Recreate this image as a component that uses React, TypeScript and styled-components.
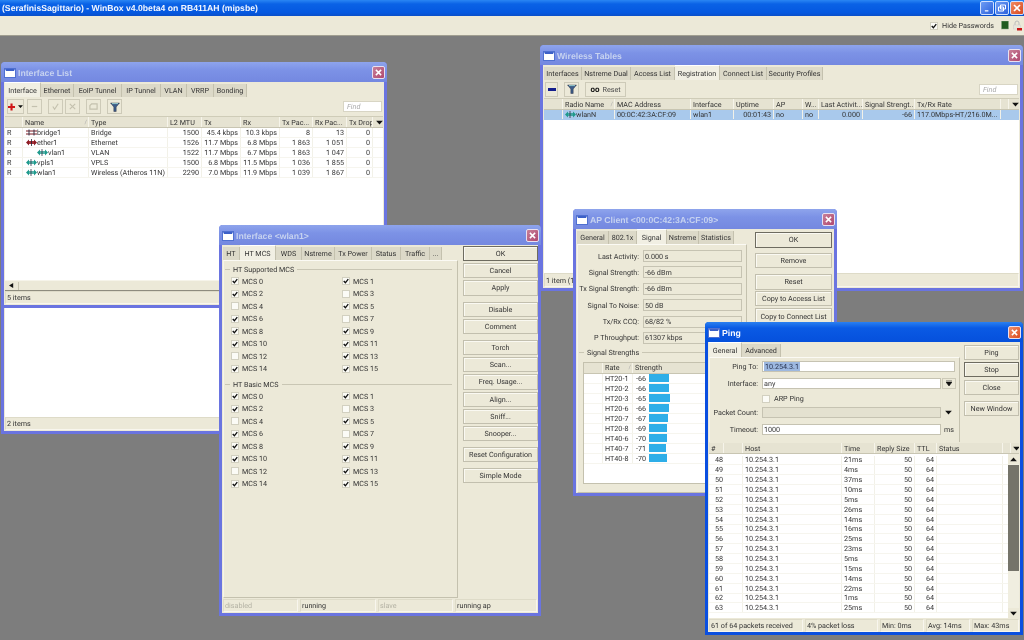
import React from "react";
import styled, { createGlobalStyle } from "styled-components";

const Global = createGlobalStyle`
  html, body { margin: 0; padding: 0; width: 1024px; height: 640px; overflow: hidden; background: #7d7d7d; }
  * { box-sizing: border-box; }
  #root { width: 1024px; height: 640px; }
`;

const Screen = styled.div`
  width: 1024px; height: 640px; display: flex; flex-direction: column;
  background: #7d7d7d; overflow: hidden; position: relative;
  font-family: Roboto, "Liberation Sans", Arial, sans-serif; font-size: 7.2px; color: #333;
  text-rendering: geometricPrecision;
  filter: blur(0.3px);
`;
const MainTitle = styled.header`
  height: 16px; flex: none; display: flex; align-items: center; justify-content: space-between;
  padding: 0 0 0 2px; background: linear-gradient(#2a86f4 0, #0a62e6 25%, #0558e0 80%, #0a4fc8 100%);
  color: #f4f8ff; font-family: "Liberation Sans", Arial, sans-serif; font-weight: bold; font-size: 8.65px;
`;
const TitleButtons = styled.div` display: flex; gap: 1px; `;
const CapBtn = styled.div<{ $red?: boolean }>`
  width: 14px; height: 14px; border: 1px solid #cfe0ff; border-radius: 2px;
  background: ${(p) => (p.$red ? "linear-gradient(135deg,#f08a60,#d84a20)" : "linear-gradient(135deg,#6d9cf4,#2c62dc)")};
  display: flex; align-items: center; justify-content: center;
`;
const MainBar = styled.div`
  height: 20px; flex: none; display: flex; align-items: center; justify-content: flex-end;
  background: #ece9d8; border-bottom: 1px solid #a09e90; padding: 0 2px 0 0;
`;
const Desktop = styled.main` flex: 1; position: relative; `;

const Win = styled.section<{ $x: number; $y: number; $w: number; $h: number; $z: number; $active?: boolean }>`
  position: absolute; left: ${(p) => p.$x}px; top: ${(p) => p.$y - 36}px;
  width: ${(p) => p.$w}px; height: ${(p) => p.$h}px; z-index: ${(p) => p.$z};
  display: flex; flex-direction: column; background: #ece9d8;
  border: 3px solid ${(p) => (p.$active ? "#0a4fe0" : "#6a74e0")}; border-top: 0;
  border-radius: 4px 4px 0 0;
`;
const TitleBar = styled.div<{ $active?: boolean }>`
  height: 20px; flex: none; margin: 0 -3px; padding: 1px 2px 0 4px; display: flex; align-items: center; gap: 3px;
  border-radius: 4px 4px 0 0; font-family: "Liberation Sans", Arial, sans-serif; font-weight: bold; font-size: 8.7px;
  background: ${(p) => (p.$active ? "linear-gradient(#2a80f0,#0a5ae4 30%,#0550dc)" : "linear-gradient(#8ea4ec,#7c92e6 40%,#7488e0)")};
  color: ${(p) => (p.$active ? "#f6f8ff" : "#c6d2f0")};
`;
const WinIcon = styled.span`
  width: 10px; height: 8px; background: #fff; border: 1px solid #fff; border-top: 2px solid #3c60c8; flex: none; outline: 1px solid #5070d0;
`;
const TitleText = styled.span` flex: 1; white-space: nowrap; `;
const CloseBtn = styled.div<{ $active?: boolean }>`
  width: 13px; height: 13px; border: 1px solid #e8e0f0; border-radius: 2px; display: flex; align-items: center; justify-content: center;
  background: ${(p) => (p.$active ? "linear-gradient(135deg,#f0906a,#dc4c20)" : "linear-gradient(135deg,#c88098,#b04870)")};
`;
const Body = styled.div` flex: 1; min-height: 0; display: flex; flex-direction: column; padding: 0 1px; `;
const Split = styled.div` flex: 1; min-height: 0; display: flex; `;
const PingTop = styled.div` height: 100px; flex: none; display: flex; `;
const LeftPane = styled.div<{ $w: number }>` width: ${(p) => p.$w}px; flex: none; display: flex; flex-direction: column; `;
const Tabs = styled.div<{ $pad?: number }>` height: 15px; flex: none; display: flex; align-items: flex-end; padding-left: ${(p) => p.$pad ?? 0}px; `;
const Tab = styled.div<{ $w: number; $active?: boolean }>`
  width: ${(p) => p.$w}px; height: ${(p) => (p.$active ? 15 : 13)}px; display: flex; align-items: center; justify-content: center; white-space: nowrap;
  background: ${(p) => (p.$active ? "#f1efe3" : "#dcd9c8")}; border-right: 1px solid #c4c1ae;
  ${(p) => p.$active && "border-top: 1px solid #fff;"}
`;
const Panel = styled.div<{ $open?: boolean }>`
  flex: 1; min-height: 0; border-top: 1px solid #fbfaf4; border-right: 1px solid #c4c1ae;
  border-bottom: ${(p) => (p.$open ? "0" : "1px solid #c4c1ae")};
  border-left: 1px solid #f6f4ea; display: flex; flex-direction: column;
`;
const Toolbar = styled.div<{ $h: number; $pad?: number }>`
  height: ${(p) => p.$h}px; flex: none; display: flex; align-items: center; gap: 6px; padding: 0 0 0 ${(p) => p.$pad ?? 2}px; border-bottom: 1px solid #cfccb8;
`;
const ToolBtn = styled.div<{ $w: number }>`
  width: ${(p) => p.$w}px; height: 15px; flex: none; display: flex; align-items: center; justify-content: center; gap: 3px;
  border: 1px solid #cdcab8; background: #ece9d8; color: #4a4a4a;
`;
const MiniBtn = styled(ToolBtn)` height: 11px; margin-left: 1px; `;
const ToolGroup = styled.div<{ $gap: number }>` display: flex; gap: ${(p) => p.$gap}px; `;
const FindBox = styled.div<{ $w: number }>`
  width: ${(p) => p.$w}px; height: 11px; margin-left: auto; margin-right: 1px; background: #fff; border: 1px solid #d8d5c4; color: #aaa; font-style: italic; padding: 0 3px;
  display: flex; align-items: center;
`;
const Table = styled.div`
  flex: 1; min-height: 0; background: #fff; display: flex; flex-direction: column; overflow: hidden;
`;
const SigTable = styled(Table)` border: 1px solid #c4c1ae; margin: 4px 3px 8px 5px; `;
const PingTable = styled(Table)` margin-top: 1px; `;
const Head = styled.div` height: 11px; flex: none; display: flex; background: #e6e3d2; border-bottom: 1px solid #c8c5b2; `;
const HeadCell = styled.div<{ $w: number }>`
  width: ${(p) => p.$w}px; flex: none; padding: 0 1px 0 2px; display: flex; align-items: center; justify-content: space-between; white-space: nowrap; overflow: hidden;
  border-right: 1px solid #f6f4ea;
`;
const SortMark = styled.span` color: #aaa; font-size: 6px; `;
const Row = styled.div<{ $h?: number; $sel?: boolean }>`
  height: ${(p) => p.$h ?? 10}px; flex: none; display: flex; align-items: center;
  background: ${(p) => (p.$sel ? "#a9c9ec" : "transparent")}; border-bottom: 1px solid ${(p) => (p.$sel ? "#a9c9ec" : "#f6f5ee")};
`;
const Cell = styled.div<{ $w: number; $right?: boolean; $indent?: number; $bare?: boolean }>`
  width: ${(p) => p.$w}px; flex: none; white-space: nowrap; overflow: hidden; display: flex; align-items: center;
  padding: 0 2px 0 ${(p) => 2 + (p.$indent ?? 0)}px; justify-content: ${(p) => (p.$right ? "flex-end" : "flex-start")};
  border-right: ${(p) => (p.$bare ? "0" : "1px solid #f2f1e8")}; height: 100%;
`;
const HScroll = styled.div`
  height: 11px; flex: none; display: flex; align-items: center; background: #ece9d8; border-top: 1px solid #f6f4ea; border-bottom: 1px solid #8e8c7e; padding-left: 3px;
`;
const HThumbEdge = styled.span` width: 1px; height: 8px; background: #c8c5b2; margin-left: 3px; `;
const Status = styled.div<{ $h?: number; $mt?: number; $mb?: number }>`
  height: ${(p) => p.$h ?? 13}px; flex: none; display: flex; gap: 2px; background: #ece9d8; margin: ${(p) => p.$mt ?? 0}px 0 ${(p) => p.$mb ?? 1}px;
`;
const StatusCell = styled.div<{ $w?: number; $dim?: boolean }>`
  ${(p) => (p.$w ? `width:${p.$w}px; flex:none;` : "flex:1;")} display: flex; align-items: center; padding: 0 1px; white-space: nowrap; overflow: hidden;
  border: 1px solid #dedbc8; border-right-color: #f8f6ee; border-bottom-color: #f8f6ee;
  color: ${(p) => (p.$dim ? "#b4b2a4" : "#333")};
`;
const BtnCol = styled.div<{ $w: number; $ml: number }>` width: ${(p) => p.$w}px; margin-left: ${(p) => p.$ml}px; flex: none; display: flex; flex-direction: column; `;
const PushBtn = styled.div<{ $mt: number; $h?: number; $focus?: boolean }>`
  height: ${(p) => p.$h ?? 15.2}px; margin-top: ${(p) => p.$mt}px; flex: none; display: flex; align-items: center; justify-content: center; white-space: nowrap;
  background: #ece9d8; border: 1px solid ${(p) => (p.$focus ? "#6e6c60" : "#c2bfae")};
  box-shadow: inset 1px 1px 0 #faf9f2;
`;
const GroupTitle = styled.div<{ $mt?: number }>`
  display: flex; align-items: center; gap: 3px; height: 10px; margin: ${(p) => p.$mt ?? 0}px 5px 0 7px; white-space: nowrap;
  &::before { content: ""; width: 5px; height: 1px; background: #c9c6b4; margin-left: -6px; }
  &::after { content: ""; flex: 1; height: 1px; background: #c9c6b4; }
`;
const McsGrid = styled.div<{ $mt: number }>` display: grid; grid-template-columns: 111px 100px; grid-auto-rows: 12.5px; margin: ${(p) => p.$mt}px 0 0 7px; `;
const McsItem = styled.div` display: flex; align-items: center; gap: 3px; `;
const Box = styled.span`
  width: 8px; height: 8px; flex: none; background: #fbfbf6; border: 1px solid #d2d0c0; display: flex; align-items: center; justify-content: center;
`;
const HideLabel = styled.span` margin: 0 7px 0 4px; `;
const CheckLabel = styled.span` margin-left: 4px; `;
const ResetGlyph = styled.b` font-size: 8px; color: #111; `;
const FormRow = styled.div<{ $h: number; $mt?: number }>` display: flex; align-items: center; height: ${(p) => p.$h}px; margin-top: ${(p) => p.$mt ?? 0}px; `;
const FieldLabel = styled.div<{ $w: number }>` width: ${(p) => p.$w}px; flex: none; text-align: right; padding-right: 4px; white-space: nowrap; `;
const Field = styled.div<{ $w: number; $white?: boolean; $dis?: boolean }>`
  width: ${(p) => p.$w}px; height: 100%; flex: none; display: flex; align-items: center; padding: 0 1px; white-space: nowrap;
  background: ${(p) => (p.$white ? "#fff" : p.$dis ? "#e4e1d0" : "#ece9d8")}; border: 1px solid #c6c3b2;
`;
const Selected = styled.span` background: #9db8e0; color: #27324f; padding: 0 1px; `;
const Bar = styled.span` height: 8px; background: #2eaee8; margin-left: 3px; display: block; flex: none; `;
const TableRow2 = styled.div` flex: 1; min-height: 0; display: flex; `;
const Rows = styled.div` flex: 1; min-width: 0; padding-top: 1.5px; `;
const VScroll = styled.div` width: 11px; flex: none; display: flex; flex-direction: column; background: #f0eee0; `;
const VArrow = styled.div` height: 10px; flex: none; display: flex; align-items: center; justify-content: center; background: #ece9d8; `;
const VThumb = styled.div` height: 106px; margin-top: 1px; flex: none; background: #75746a; `;
const VTrack = styled.div` flex: 1; background: #f0eee0; `;
const Tail = styled.div<{ $ml: number }>` margin-left: ${(p) => p.$ml}px; display: flex; align-items: center; `;

const X = ({ s = 7 }: { s?: number }) => (
  <svg width={s} height={s} viewBox="0 0 8 8"><path d="M1 1l6 6M7 1L1 7" stroke="#fff" strokeWidth="1.7" /></svg>
);
const Tick = () => (
  <svg width="6" height="6" viewBox="0 0 8 8"><path d="M1 4l2.2 2.4L7 1.5" fill="none" stroke="#111" strokeWidth="1.8" /></svg>
);
const Check = ({ on }: { on: boolean }) => <Box>{on ? <Tick /> : null}</Box>;
const Arrow = ({ dir = "down" }: { dir?: "down" | "up" | "left" }) => (
  <svg width="7" height="5" viewBox="0 0 8 6">
    <path d={dir === "down" ? "M0 1h8L4 5.5z" : dir === "up" ? "M0 5h8L4 .5z" : "M6 0v6L1 3z"} fill="#111" />
  </svg>
);
const Funnel = () => (
  <svg width="10" height="10" viewBox="0 0 10 10"><path d="M.5 1h9L6.2 5v4.5H3.8V5z" fill="#3c5c88" stroke="#223" strokeWidth=".4" /><path d="M2 1.6h6" stroke="#9cc" /></svg>
);
const IfIcon = ({ color = "#1f9a8c" }: { color?: string }) => (
  <svg width="11" height="7" viewBox="0 0 11 7" style={{ flex: "none" }}>
    <path d="M0 3.5L3 .5v6zM11 3.5L8 .5v6z" fill={color} />
    <path d="M3 2h5v3H3z" fill={color} opacity=".75" />
    <path d="M5 0v7" stroke="#334" strokeWidth=".8" />
  </svg>
);
const BridgeIcon = () => (
  <svg width="11" height="7" viewBox="0 0 11 7" style={{ flex: "none" }}>
    <path d="M0 2h11M0 5h11" stroke="#7c1a22" strokeWidth="1" /><path d="M3 .5v6M8 .5v6" stroke="#334" strokeWidth="1" />
  </svg>
);
const EtherIcon = () => (
  <svg width="11" height="7" viewBox="0 0 11 7" style={{ flex: "none" }}>
    <path d="M0 3.5L3 .5v6zM11 3.5L8 .5v6z" fill="#8c1c24" /><path d="M3 2h5v3H3z" fill="#a83038" /><path d="M5.5 0v7" stroke="#223" strokeWidth=".8" />
  </svg>
);
const Plus = () => (
  <svg width="10" height="10" viewBox="0 0 10 10"><path d="M3.5 0h3v3.5H10v3H6.5V10h-3V6.5H0v-3h3.5z" fill="#d01818" /></svg>
);
const Dim = ({ d }: { d: string }) => (
  <svg width="9" height="9" viewBox="0 0 10 10"><path d={d} fill="none" stroke="#c4c1ae" strokeWidth="1.3" /></svg>
);

type Col = { t: string; w: number; r?: boolean; sort?: boolean; arrow?: boolean };
const Header = ({ cols }: { cols: Col[] }) => (
  <Head>
    {cols.map((c, i) => (
      <HeadCell key={i} $w={c.w}>
        <span>{c.t}</span>
        {c.sort ? <SortMark>/</SortMark> : null}
        {c.arrow ? <Arrow /> : null}
      </HeadCell>
    ))}
  </Head>
);

const ifCols: Col[] = [
  { t: "", w: 18 }, { t: "Name", w: 66, sort: true }, { t: "Type", w: 79 }, { t: "L2 MTU", w: 34, r: true },
  { t: "Tx", w: 39, r: true }, { t: "Rx", w: 39, r: true }, { t: "Tx Pac...", w: 33, r: true }, { t: "Rx Pac...", w: 34, r: true },
  { t: "Tx Drop", w: 26, r: true }, { t: "", w: 12, arrow: true },
];
const ifRows = [
  { n: "bridge1", ic: <BridgeIcon />, i: 1, ty: "Bridge", v: ["1500", "45.4 kbps", "10.3 kbps", "8", "13", "0"] },
  { n: "ether1", ic: <EtherIcon />, i: 1, ty: "Ethernet", v: ["1526", "11.7 Mbps", "6.8 Mbps", "1 863", "1 051", "0"] },
  { n: "vlan1", ic: <IfIcon />, i: 12, ty: "VLAN", v: ["1522", "11.7 Mbps", "6.7 Mbps", "1 863", "1 047", "0"] },
  { n: "vpls1", ic: <IfIcon />, i: 1, ty: "VPLS", v: ["1500", "6.8 Mbps", "11.5 Mbps", "1 036", "1 855", "0"] },
  { n: "wlan1", ic: <IfIcon />, i: 1, ty: "Wireless (Atheros 11N)", v: ["2290", "7.0 Mbps", "11.9 Mbps", "1 039", "1 867", "0"] },
];
const ifTabs: [string, number][] = [["Interface", 36], ["Ethernet", 33], ["EoIP Tunnel", 48], ["IP Tunnel", 39], ["VLAN", 26], ["VRRP", 27], ["Bonding", 33]];

const wlTabs: [string, number][] = [["HT", 17], ["HT MCS", 36], ["WDS", 26], ["Nstreme", 33], ["Tx Power", 37], ["Status", 29], ["Traffic", 29], ["...", 12]];
const supported = [1, 1, 1, 0, 0, 1, 1, 0, 1, 1, 1, 1, 0, 1, 1, 1];
const basic = [1, 1, 1, 0, 0, 1, 1, 0, 1, 1, 1, 1, 0, 1, 1, 1];
const wlBtns: [string, number, boolean?][] = [
  ["OK", 1, true], ["Cancel", 2], ["Apply", 2], ["Disable", 6], ["Comment", 2], ["Torch", 6], ["Scan...", 2], ["Freq. Usage...", 2],
  ["Align...", 2], ["Sniff...", 2], ["Snooper...", 2], ["Reset Configuration", 6], ["Simple Mode", 6],
];

const wtCols: Col[] = [
  { t: "", w: 19 }, { t: "Radio Name", w: 52, sort: true }, { t: "MAC Address", w: 76 }, { t: "Interface", w: 43 }, { t: "Uptime", w: 40 }, { t: "AP", w: 29 },
  { t: "W...", w: 16 }, { t: "Last Activit...", w: 44 }, { t: "Signal Strengt...", w: 52 }, { t: "Tx/Rx Rate", w: 86 }, { t: "", w: 8 }, { t: "", w: 12, arrow: true },
];
const wtTabs: [string, number][] = [["Interfaces", 38], ["Nstreme Dual", 49], ["Access List", 44], ["Registration", 45], ["Connect List", 47], ["Security Profiles", 56]];

const apTabs: [string, number][] = [["General", 32], ["802.1x", 28], ["Signal", 30], ["Nstreme", 32], ["Statistics", 35]];
const apForm = [
  ["Last Activity:", "0.000 s"], ["Signal Strength:", "-66 dBm"], ["Tx Signal Strength:", "-66 dBm"], ["Signal To Noise:", "50 dB"], ["Tx/Rx CCQ:", "68/82 %"], ["P Throughput:", "61307 kbps"],
];
const sigCols: Col[] = [{ t: "", w: 19 }, { t: "Rate", w: 30, sort: true }, { t: "Strength", w: 110 }];
const sig: [string, number, number][] = [
  ["HT20-1", -66, 20], ["HT20-2", -66, 20], ["HT20-3", -65, 21], ["HT20-6", -66, 20], ["HT20-7", -67, 19], ["HT20-8", -69, 18], ["HT40-6", -70, 17.5], ["HT40-7", -71, 17], ["HT40-8", -70, 17.5],
];
const apBtns: [string, number, boolean?][] = [["OK", 3, true], ["Remove", 5], ["Reset", 6], ["Copy to Access List", 1], ["Copy to Connect List", 2]];

const pingCols: Col[] = [
  { t: "#", w: 15 }, { t: "", w: 19 }, { t: "Host", w: 99 }, { t: "Time", w: 33 }, { t: "Reply Size", w: 40 }, { t: "TTL", w: 22 }, { t: "Status", w: 66 }, { t: "", w: 8 }, { t: "", w: 11, arrow: true },
];
const times = [21, 4, 37, 10, 5, 26, 14, 16, 25, 23, 5, 15, 14, 22, 1, 25];
const pingBtns: [string, number, boolean?][] = [["Ping", 3], ["Stop", 2, true], ["Close", 3], ["New Window", 6]];

export default function App() {
  return (
    <Screen>
      <Global />
      <MainTitle>
        <span>(SerafinisSagittario) - WinBox v4.0beta4 on RB411AH (mipsbe)</span>
        <TitleButtons>
          <CapBtn><svg width="7" height="7" viewBox="0 0 8 8"><path d="M1 6h4v1.4H1z" fill="#fff" /></svg></CapBtn>
          <CapBtn><svg width="8" height="8" viewBox="0 0 8 8"><path d="M2.5 1h5v4h-5zM.5 3h5v4h-5z" fill="none" stroke="#fff" /></svg></CapBtn>
          <CapBtn $red><X s={8} /></CapBtn>
        </TitleButtons>
      </MainTitle>
      <MainBar>
        <Box><Tick /></Box>
        <HideLabel>Hide Passwords</HideLabel>
        <svg width="8" height="9" viewBox="0 0 8 9"><rect width="7" height="8" x=".5" fill="#1f5c1f" stroke="#8a8" strokeWidth=".5" /></svg>
        <svg width="10" height="11" viewBox="0 0 10 11" style={{ marginLeft: 3 }}>
          <path d="M3 5V3a2 2 0 014 0v2" fill="none" stroke="#bbb" /><rect x="1.5" y="5" width="7" height="4" fill="#e8e6dc" stroke="#ccc" strokeWidth=".5" /><rect x="5" y="8" width="5" height="2.5" fill="#c81818" />
        </svg>
      </MainBar>
      <Desktop>
        <Win $x={1} $y={250} $w={300} $h={184} $z={1}>
          <TitleBar><WinIcon /><TitleText /></TitleBar>
          <Body>
            <Table />
            <Status><StatusCell>2 items</StatusCell></Status>
          </Body>
        </Win>

        <Win $x={1} $y={62} $w={386} $h={246} $z={2}>
          <TitleBar><WinIcon /><TitleText>Interface List</TitleText><CloseBtn><X /></CloseBtn></TitleBar>
          <Body>
            <Tabs>{ifTabs.map(([t, w], i) => <Tab key={t} $w={w} $active={i === 0}>{t}</Tab>)}</Tabs>
            <Toolbar $h={20}>
              <ToolGroup $gap={3}>
                <ToolBtn $w={17}><Plus /><Arrow /></ToolBtn>
                <ToolBtn $w={15}><Dim d="M2 5h6" /></ToolBtn>
              </ToolGroup>
              <ToolGroup $gap={2}>
                <ToolBtn $w={15}><Dim d="M2 5l2 3 4-6" /></ToolBtn>
                <ToolBtn $w={15}><Dim d="M2 2l6 6M8 2l-6 6" /></ToolBtn>
              </ToolGroup>
              <ToolBtn $w={15}><Dim d="M1 8V4l2-2h6v6z" /></ToolBtn>
              <ToolBtn $w={15}><Funnel /></ToolBtn>
              <FindBox $w={39}>Find</FindBox>
            </Toolbar>
            <Table>
              <Header cols={ifCols} />
              {ifRows.map((r) => (
                <Row key={r.n}>
                  <Cell $w={18}>R</Cell>
                  <Cell $w={66} $indent={r.i}>{r.ic}{r.n}</Cell>
                  <Cell $w={79}>{r.ty}</Cell>
                  {r.v.map((x, i) => <Cell key={i} $w={ifCols[i + 3].w} $right>{x}</Cell>)}
                </Row>
              ))}
            </Table>
            <HScroll><Arrow dir="left" /><HThumbEdge /></HScroll>
            <Status><StatusCell>5 items</StatusCell></Status>
          </Body>
        </Win>

        <Win $x={219} $y={225} $w={322} $h={391} $z={3}>
          <TitleBar><WinIcon /><TitleText>Interface &lt;wlan1&gt;</TitleText><CloseBtn><X /></CloseBtn></TitleBar>
          <Body>
            <Split>
              <LeftPane $w={235}>
                <Tabs>{wlTabs.map(([t, w], i) => <Tab key={t} $w={w} $active={i === 1}>{t}</Tab>)}</Tabs>
                <Panel>
                  <GroupTitle $mt={3}>HT Supported MCS</GroupTitle>
                  <McsGrid $mt={1}>
                    {supported.map((on, i) => <McsItem key={i}><Check on={!!on} />MCS {i}</McsItem>)}
                  </McsGrid>
                  <GroupTitle $mt={4}>HT Basic MCS</GroupTitle>
                  <McsGrid $mt={1}>
                    {basic.map((on, i) => <McsItem key={i}><Check on={!!on} />MCS {i}</McsItem>)}
                  </McsGrid>
                </Panel>
              </LeftPane>
              <BtnCol $w={75} $ml={5}>
                {wlBtns.map(([t, mt, f]) => <PushBtn key={t} $mt={mt} $focus={f}>{t}</PushBtn>)}
              </BtnCol>
            </Split>
            <Status $h={13} $mt={1}>
              <StatusCell $w={75} $dim>disabled</StatusCell>
              <StatusCell $w={76}>running</StatusCell>
              <StatusCell $w={75} $dim>slave</StatusCell>
              <StatusCell>running ap</StatusCell>
            </Status>
          </Body>
        </Win>

        <Win $x={540} $y={45} $w={483} $h={246} $z={1}>
          <TitleBar><WinIcon /><TitleText>Wireless Tables</TitleText><CloseBtn><X /></CloseBtn></TitleBar>
          <Body>
            <Tabs>{wtTabs.map(([t, w], i) => <Tab key={t} $w={w} $active={i === 3}>{t}</Tab>)}</Tabs>
            <Toolbar $h={19} $pad={1}>
              <ToolBtn $w={13}><svg width="8" height="3"><rect width="8" height="3" fill="#141e8c" /></svg></ToolBtn>
              <ToolBtn $w={15}><Funnel /></ToolBtn>
              <ToolBtn $w={41}><ResetGlyph>oo</ResetGlyph> Reset</ToolBtn>
              <FindBox $w={39}>Find</FindBox>
            </Toolbar>
            <Table>
              <Header cols={wtCols} />
              <Row $sel>
                <Cell $w={19} />
                <Cell $w={52}><IfIcon />wlanN</Cell>
                <Cell $w={76}>00:0C:42:3A:CF:09</Cell>
                <Cell $w={43}>wlan1</Cell>
                <Cell $w={40} $right>00:01:43</Cell>
                <Cell $w={29}>no</Cell>
                <Cell $w={16}>no</Cell>
                <Cell $w={44} $right>0.000</Cell>
                <Cell $w={52} $right>-66</Cell>
                <Cell $w={86}>117.0Mbps-HT/216.0M...</Cell>
              </Row>
            </Table>
            <Status $h={14}><StatusCell>1 item (1 selected)</StatusCell></Status>
          </Body>
        </Win>

        <Win $x={573} $y={209} $w={264} $h={287} $z={2}>
          <TitleBar><WinIcon /><TitleText>AP Client &lt;00:0C:42:3A:CF:09&gt;</TitleText><CloseBtn><X /></CloseBtn></TitleBar>
          <Body>
            <Split>
              <LeftPane $w={170}>
                <Tabs>{apTabs.map(([t, w], i) => <Tab key={t} $w={w} $active={i === 2}>{t}</Tab>)}</Tabs>
                <Panel>
                  {apForm.map(([l, v], i) => (
                    <FormRow key={l} $h={12} $mt={i === 0 ? 5 : 4.4}>
                      <FieldLabel $w={65}>{l}</FieldLabel>
                      <Field $w={99}>{v}</Field>
                    </FormRow>
                  ))}
                  <GroupTitle $mt={4}>Signal Strengths</GroupTitle>
                  <SigTable>
                    <Header cols={sigCols} />
                    {sig.map(([r, v, b]) => (
                      <Row key={r}>
                        <Cell $w={19} />
                        <Cell $w={30}>{r}</Cell>
                        <Cell $w={110} $bare $indent={1}>
                          {v}<Bar style={{ width: b }} />
                        </Cell>
                      </Row>
                    ))}
                  </SigTable>
                </Panel>
              </LeftPane>
              <BtnCol $w={77} $ml={8}>
                {apBtns.map(([t, mt, f]) => <PushBtn key={t} $mt={mt} $h={15.6} $focus={f}>{t}</PushBtn>)}
              </BtnCol>
            </Split>
          </Body>
        </Win>

        <Win $x={705} $y={322} $w={318} $h={313} $z={4} $active>
          <TitleBar $active><WinIcon /><TitleText>Ping</TitleText><CloseBtn $active><X /></CloseBtn></TitleBar>
          <Body>
            <PingTop>
              <LeftPane $w={251}>
                <Tabs>
                  <Tab $w={33} $active>General</Tab>
                  <Tab $w={39}>Advanced</Tab>
                </Tabs>
                <Panel $open>
                  <FormRow $h={11} $mt={3}>
                    <FieldLabel $w={52}>Ping To:</FieldLabel>
                    <Field $w={193} $white><Selected>10.254.3.1</Selected></Field>
                  </FormRow>
                  <FormRow $h={11} $mt={6}>
                    <FieldLabel $w={52}>Interface:</FieldLabel>
                    <Field $w={179} $white>any</Field>
                    <MiniBtn $w={14}>
                      <svg width="6" height="7" viewBox="0 0 6 7"><path d="M0 0h6M0 2h6L3 6z" stroke="#111" strokeWidth=".6" fill="#111" /></svg>
                    </MiniBtn>
                  </FormRow>
                  <FormRow $h={9} $mt={5}>
                    <FieldLabel $w={52} />
                    <Check on={false} />
                    <CheckLabel>ARP Ping</CheckLabel>
                  </FormRow>
                  <FormRow $h={11} $mt={4}>
                    <FieldLabel $w={52}>Packet Count:</FieldLabel>
                    <Field $w={179} $dis />
                    <Tail $ml={4}><Arrow /></Tail>
                  </FormRow>
                  <FormRow $h={11} $mt={6}>
                    <FieldLabel $w={52}>Timeout:</FieldLabel>
                    <Field $w={179} $white>1000</Field>
                    <Tail $ml={3}>ms</Tail>
                  </FormRow>
                </Panel>
              </LeftPane>
              <BtnCol $w={55} $ml={4}>
                {pingBtns.map(([t, mt, f]) => <PushBtn key={t} $mt={mt} $h={15} $focus={f}>{t}</PushBtn>)}
              </BtnCol>
            </PingTop>
            <PingTable>
              <Header cols={pingCols} />
              <TableRow2>
                <Rows>
                  {times.map((t, i) => (
                    <Row key={i} $h={9.87}>
                      <Cell $w={34} $indent={4}>{48 + i}</Cell>
                      <Cell $w={99}>10.254.3.1</Cell>
                      <Cell $w={33}>{t}ms</Cell>
                      <Cell $w={40} $right>50</Cell>
                      <Cell $w={22} $right>64</Cell>
                      <Cell $w={66} />
                    </Row>
                  ))}
                </Rows>
                <VScroll>
                  <VArrow><Arrow dir="up" /></VArrow>
                  <VThumb />
                  <VTrack />
                  <VArrow><Arrow /></VArrow>
                </VScroll>
              </TableRow2>
            </PingTable>
            <Status $h={13} $mt={1} $mb={0}>
              <StatusCell $w={94}>61 of 64 packets received</StatusCell>
              <StatusCell $w={73}>4% packet loss</StatusCell>
              <StatusCell $w={44}>Min: 0ms</StatusCell>
              <StatusCell $w={44}>Avg: 14ms</StatusCell>
              <StatusCell>Max: 43ms</StatusCell>
            </Status>
          </Body>
        </Win>
      </Desktop>
    </Screen>
  );
}
